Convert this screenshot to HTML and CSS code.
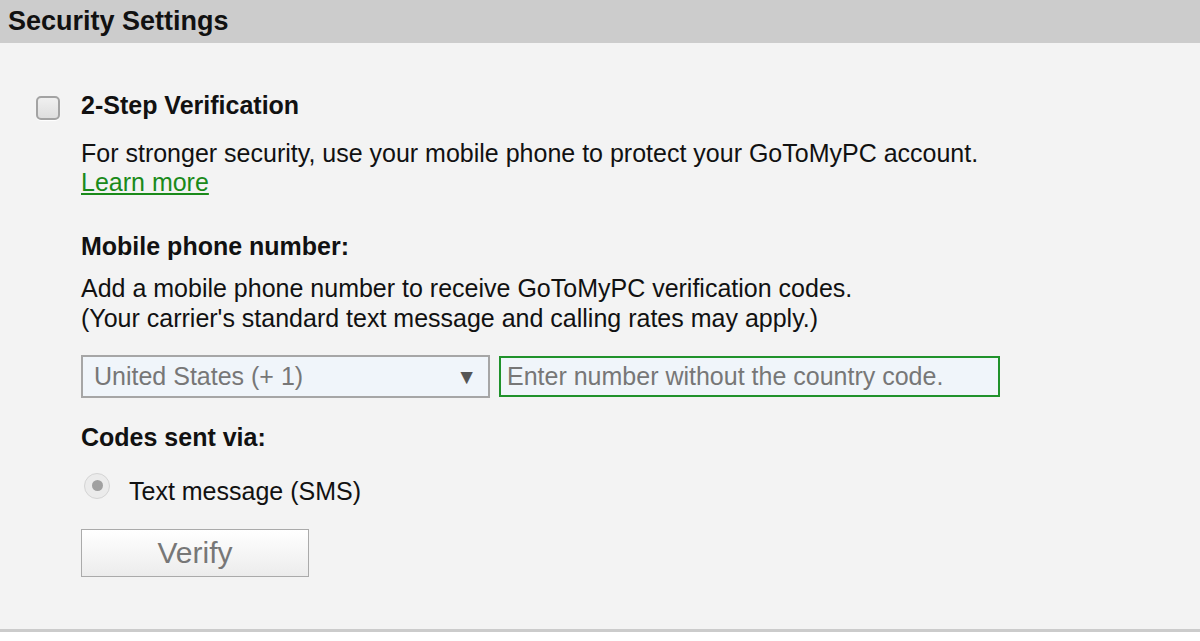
FILE: index.html
```html
<!DOCTYPE html>
<html>
<head>
<meta charset="utf-8">
<link rel="stylesheet" href="styles.css">
</head>
<body>
<div class="page">
  <div class="header"><h1 class="title">Security Settings</h1></div>
  <div class="panel">
    <div class="option">
      <span class="checkbox"></span>
      <div class="option-body">
        <div class="option-title">2-Step Verification</div>
        <p class="desc">For stronger security, use your mobile phone to protect your GoToMyPC account.<br><a class="link" href="#">Learn more</a></p>
        <div class="label">Mobile phone number:</div>
        <p class="desc2">Add a mobile phone number to receive GoToMyPC verification codes.<br>(Your carrier's standard text message and calling rates may apply.)</p>
        <div class="phone-row">
          <div class="select"><span>United States (+ 1)</span><span class="arrow">&#9660;</span></div>
          <div class="input">Enter number without the country code.</div>
        </div>
        <div class="label codes">Codes sent via:</div>
        <div class="radio-row">
          <span class="radio"><span class="dot"></span></span>
          <span class="radio-label">Text message (SMS)</span>
        </div>
        <div class="button">Verify</div>
      </div>
    </div>
  </div>
</div>
</body>
</html>
```
FILE: styles.css
```css
html, body { margin: 0; padding: 0; background: #fff; }
body { font-family: "Liberation Sans", Arial, sans-serif; color: #111; }
.page { width: 1200px; }
.header { background: #cccccc; height: 43px; display: flex; align-items: center; padding-left: 8px; }
.title { margin: 0; font-size: 27px; font-weight: bold; color: #111; }
.panel { background: #f3f3f3; height: 586px; border-bottom: 3px solid #cbcbcb; }
.option { display: flex; padding-top: 47px; padding-left: 36px; }
.checkbox { box-sizing: border-box; width: 24px; height: 24px; flex: none; margin-top: 6px; border: 2px solid #a3a3a3; border-radius: 5px; background: linear-gradient(#f0f0f0, #dedede); box-shadow: 0 1px 1px #fff; }
.option-body { margin-left: 21px; }
.option-title { font-size: 25px; font-weight: bold; line-height: 30px; }
.desc { margin: 19px 0 0; font-size: 25px; line-height: 29px; }
.link { color: #1a8a1a; text-decoration: underline; }
.label { font-size: 25px; font-weight: bold; line-height: 30px; margin-top: 34px; }
.desc2 { margin: 12px 0 0; font-size: 25px; line-height: 30px; }
.phone-row { display: flex; gap: 9px; margin-top: 22px; }
.select { width: 409px; height: 43px; box-sizing: border-box; border: 2px solid #a6a6a6; background: #f0f5fa; display: flex; align-items: center; justify-content: space-between; padding: 0 11px 0 11px; font-size: 25px; color: #777; }
.arrow { font-size: 21px; color: #555; }
.input { width: 501px; height: 41px; margin-top: 1px; box-sizing: border-box; border: 2px solid #20922b; background: #f0f5fa; display: flex; align-items: center; padding-left: 6px; font-size: 25px; color: #777; }
.codes { margin-top: 24px; }
.radio-row { display: flex; align-items: center; margin-top: 19px; }
.radio { width: 26px; height: 26px; border-radius: 50%; border: 1px solid #d4d4d4; background: #ebebeb; box-sizing: border-box; display: flex; align-items: center; justify-content: center; margin-left: 3px; margin-bottom: 6px; flex: none; }
.dot { width: 11px; height: 11px; border-radius: 50%; background: #a0a0a0; }
.radio-label { font-size: 25px; margin-left: 19px; margin-top: 6px; }
.button { width: 228px; height: 48px; box-sizing: border-box; border: 1px solid #aaaaaa; background: linear-gradient(#ffffff, #ececec); margin-top: 23px; display: flex; align-items: center; justify-content: center; font-size: 30px; color: #777; }
```
